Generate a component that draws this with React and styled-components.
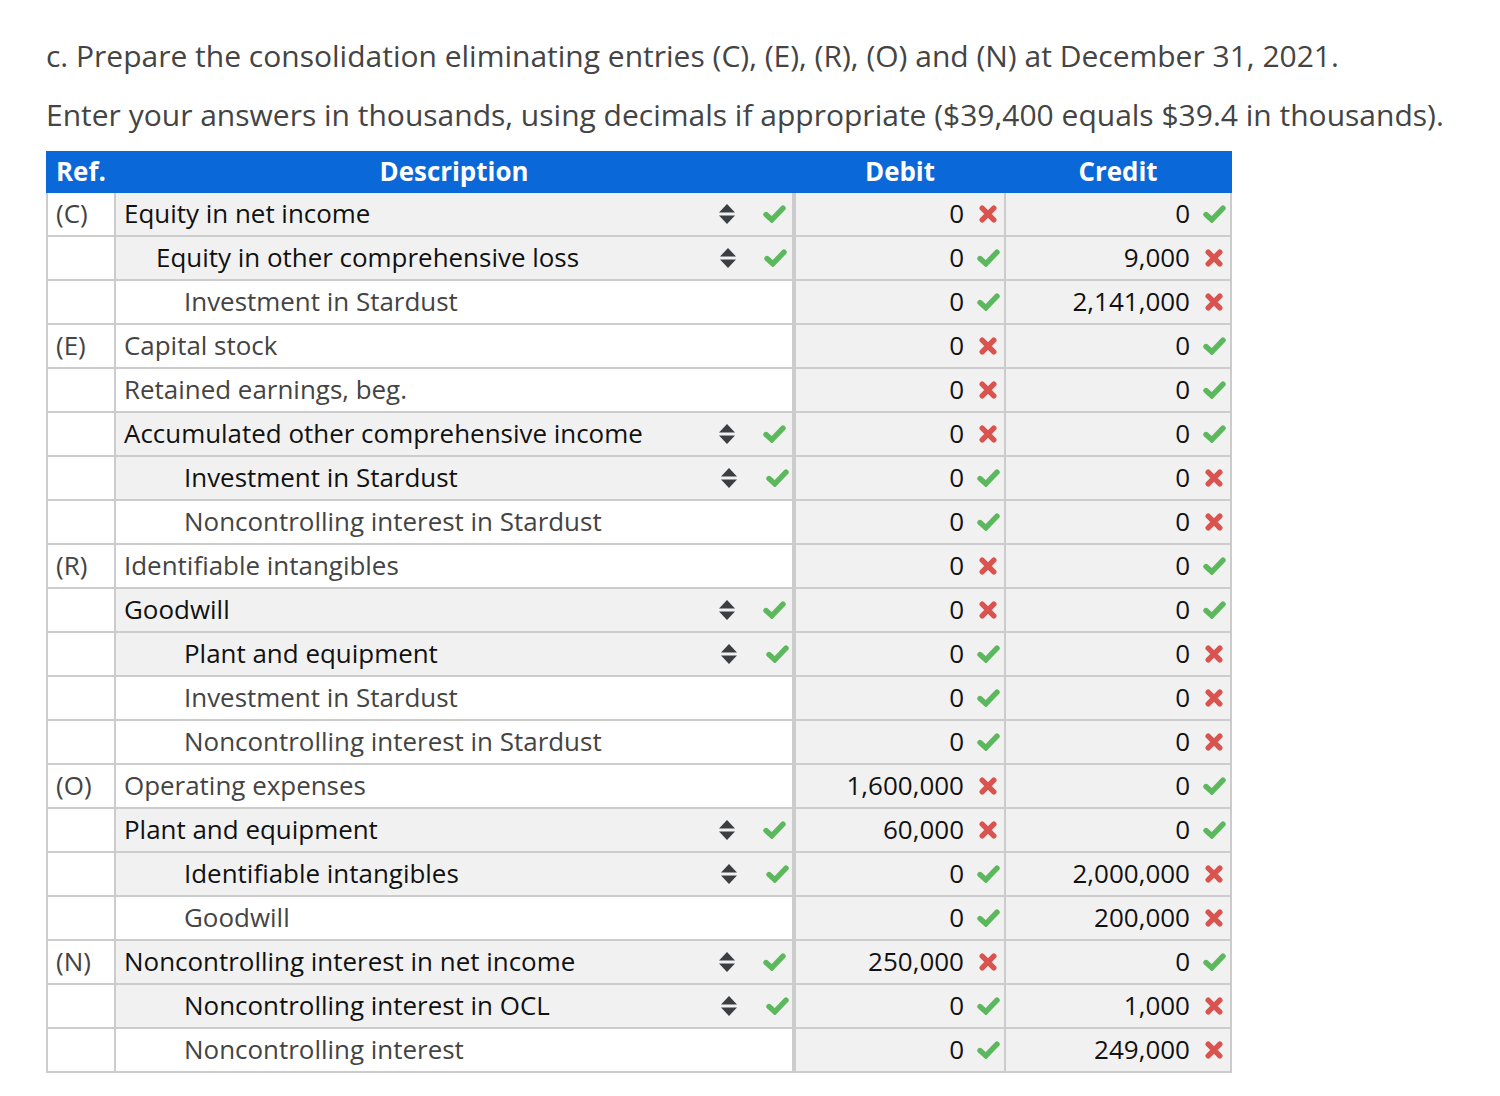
import React from "react";
import styled, { createGlobalStyle } from "styled-components";

const GlobalStyle = createGlobalStyle`
  html, body {
    margin: 0;
    padding: 0;
    background: #fff;
  }
  body {
    font-family: "Open Sans", "Liberation Sans", sans-serif;
    color: #444;
  }
`;

const rows = [
  { ref: "(C)", text: "Equity in net income", level: 0, select: true, debit: "0", debitOk: false, credit: "0", creditOk: true },
  { text: "Equity in other comprehensive loss", level: 1, select: true, debit: "0", debitOk: true, credit: "9,000", creditOk: false },
  { text: "Investment in Stardust", level: 2, debit: "0", debitOk: true, credit: "2,141,000", creditOk: false },
  { ref: "(E)", text: "Capital stock", level: 0, debit: "0", debitOk: false, credit: "0", creditOk: true },
  { text: "Retained earnings, beg.", level: 0, debit: "0", debitOk: false, credit: "0", creditOk: true },
  { text: "Accumulated other comprehensive income", level: 0, select: true, debit: "0", debitOk: false, credit: "0", creditOk: true },
  { text: "Investment in Stardust", level: 2, select: true, debit: "0", debitOk: true, credit: "0", creditOk: false },
  { text: "Noncontrolling interest in Stardust", level: 2, debit: "0", debitOk: true, credit: "0", creditOk: false },
  { ref: "(R)", text: "Identifiable intangibles", level: 0, debit: "0", debitOk: false, credit: "0", creditOk: true },
  { text: "Goodwill", level: 0, select: true, debit: "0", debitOk: false, credit: "0", creditOk: true },
  { text: "Plant and equipment", level: 2, select: true, debit: "0", debitOk: true, credit: "0", creditOk: false },
  { text: "Investment in Stardust", level: 2, debit: "0", debitOk: true, credit: "0", creditOk: false },
  { text: "Noncontrolling interest in Stardust", level: 2, debit: "0", debitOk: true, credit: "0", creditOk: false },
  { ref: "(O)", text: "Operating expenses", level: 0, debit: "1,600,000", debitOk: false, credit: "0", creditOk: true },
  { text: "Plant and equipment", level: 0, select: true, debit: "60,000", debitOk: false, credit: "0", creditOk: true },
  { text: "Identifiable intangibles", level: 2, select: true, debit: "0", debitOk: true, credit: "2,000,000", creditOk: false },
  { text: "Goodwill", level: 2, debit: "0", debitOk: true, credit: "200,000", creditOk: false },
  { ref: "(N)", text: "Noncontrolling interest in net income", level: 0, select: true, debit: "250,000", debitOk: false, credit: "0", creditOk: true },
  { text: "Noncontrolling interest in OCL", level: 2, select: true, debit: "0", debitOk: true, credit: "1,000", creditOk: false },
  { text: "Noncontrolling interest", level: 2, debit: "0", debitOk: true, credit: "249,000", creditOk: false },
];

const GreenCheck = () => (
  <svg width="23" height="18" viewBox="0 0 23 18">
    <path d="M3 9.5 L8.8 14.8 L20 3.2" fill="none" stroke="#5cb85c" strokeWidth="5.4" strokeLinecap="round" strokeLinejoin="miter" />
  </svg>
);

const RedCross = () => (
  <svg width="18" height="18" viewBox="0 0 18 18">
    <path d="M3.2 3.2 L14.8 14.8 M14.8 3.2 L3.2 14.8" fill="none" stroke="#d9534f" strokeWidth="5.4" strokeLinecap="round" />
  </svg>
);

const SortArrows = () => (
  <svg width="16" height="20" viewBox="0 0 16 20">
    <path d="M8 0 L16 8.5 L0 8.5 Z M0 11.5 L16 11.5 L8 20 Z" fill="#3b3f42" />
  </svg>
);

const Mark = ({ ok }) => (
  <MarkBox>
    {ok ? <GreenCheck /> : <RedCross />}
  </MarkBox>
);

const App = () => {
  return (
    <Page>
      <GlobalStyle />
      <Question>c. Prepare the consolidation eliminating entries (C), (E), (R), (O) and (N) at December 31, 2021.</Question>
      <Question>Enter your answers in thousands, using decimals if appropriate ($39,400 equals $39.4 in thousands).</Question>
      <Sheet>
        <colgroup>
          <col width="70" />
          <col width="680" />
          <col width="210" />
          <col width="226" />
        </colgroup>
        <thead>
          <tr>
            <HeadCell $left>Ref.</HeadCell>
            <HeadCell $inset={4}>Description</HeadCell>
            <HeadCell $inset={2}>Debit</HeadCell>
            <HeadCell $inset={2}>Credit</HeadCell>
          </tr>
        </thead>
        <tbody>
          {rows.map((row, i) => (
            <tr key={i}>
              <RefCell>{row.ref}</RefCell>
              <DescCell $select={row.select}>
                <DescInner $level={row.level}>
                  <CellText>{row.text}</CellText>
                  {row.select && (
                    <SelectEnd $level={row.level}>
                      <SortArrows />
                      <GreenCheck />
                    </SelectEnd>
                  )}
                </DescInner>
              </DescCell>
              <AmountCell>
                <AmountInner>
                  <CellText>{row.debit}</CellText>
                  <Mark ok={row.debitOk} />
                </AmountInner>
              </AmountCell>
              <AmountCell>
                <AmountInner>
                  <CellText>{row.credit}</CellText>
                  <Mark ok={row.creditOk} />
                </AmountInner>
              </AmountCell>
            </tr>
          ))}
        </tbody>
      </Sheet>
    </Page>
  );
};

const Page = styled.div`
  width: 1500px;
  height: 1096px;
  box-sizing: border-box;
  padding: 36px 0 0 46px;
  overflow: hidden;
`;

const Question = styled.p`
  margin: 0 0 19px;
  font-size: 30px;
  line-height: 40px;
  color: #444;
  white-space: nowrap;
`;

const Sheet = styled.table`
  width: 1186px;
  margin-top: -3px;
  table-layout: fixed;
  border-collapse: separate;
  border-spacing: 0;
  font-size: 26px;
`;

const HeadCell = styled.th`
  height: 42px;
  box-sizing: border-box;
  padding: 0 ${(p) => p.$inset || 0}px 2px ${(p) => (p.$left ? "10px" : "0")};
  background: #0b68d9;
  color: #fff;
  font-weight: 700;
  font-size: 25.9px;
  line-height: 40px;
  text-align: ${(p) => (p.$left ? "left" : "center")};
`;

const RefCell = styled.td`
  height: 44px;
  box-sizing: border-box;
  padding: 0 0 2px 8px;
  border-left: 2px solid #ccc;
  border-right: 2px solid #ccc;
  border-bottom: 2px solid #ccc;
  color: #444;
`;

const DescCell = styled.td`
  height: 44px;
  box-sizing: border-box;
  padding: 0;
  border-right: 4px solid #ccc;
  border-bottom: 2px solid #ccc;
  background: ${(p) => (p.$select ? "#f1f1f1" : "#fff")};
  color: ${(p) => (p.$select ? "#111" : "#444")};
  font-size: 25.95px;
`;

const DescInner = styled.div`
  display: flex;
  align-items: center;
  justify-content: space-between;
  padding-left: ${(p) => [8, 40, 68][p.$level]}px;
  white-space: nowrap;
`;

const CellText = styled.span`
  padding-bottom: 2px;
`;

const SelectEnd = styled.div`
  display: flex;
  align-items: center;
  gap: ${(p) => (p.$level === 2 ? 29 : 28)}px;
  padding-right: ${(p) => [6, 5, 3][p.$level]}px;
`;

const AmountCell = styled.td`
  height: 44px;
  box-sizing: border-box;
  padding: 0;
  border-right: 2px solid #ccc;
  border-bottom: 2px solid #ccc;
  background: #f1f1f1;
  color: #111;
`;

const AmountInner = styled.div`
  display: flex;
  align-items: center;
  justify-content: flex-end;
  gap: 12px;
  padding-right: 4px;
`;

const MarkBox = styled.span`
  display: flex;
  align-items: center;
  justify-content: center;
  width: 24px;
`;

export default App;
